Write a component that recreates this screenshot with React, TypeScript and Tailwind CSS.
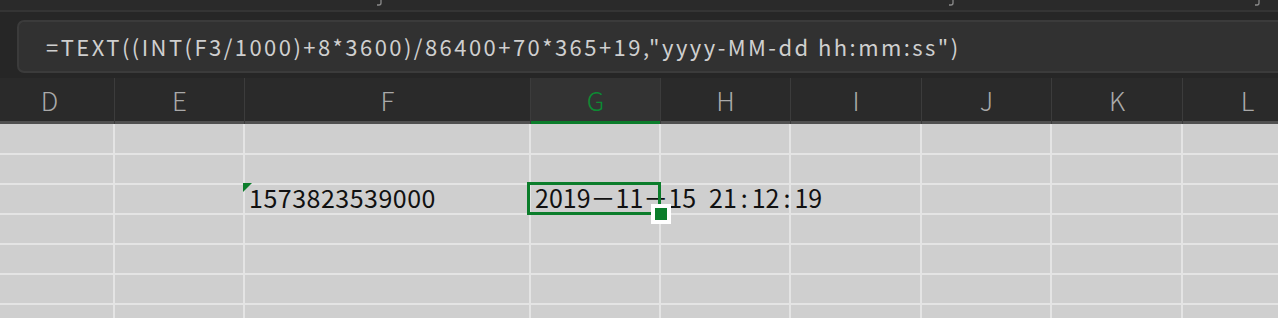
import React from 'react';

const cols = [
  { name: 'D', w: 'w-[115px]' },
  { name: 'E', w: 'w-[130px]' },
  { name: 'F', w: 'w-[286px]' },
  { name: 'G', w: 'w-[130px]' },
  { name: 'H', w: 'w-[130px]' },
  { name: 'I', w: 'w-[131px]' },
  { name: 'J', w: 'w-[130px]' },
  { name: 'K', w: 'w-[131px]' },
  { name: 'L', w: 'w-[130px]' },
];

const rows = [0, 1, 2, 3, 4, 5, 6];

const cjk = "font-['Noto_Sans_CJK_JP','Noto_Sans',sans-serif]";

function Cell({ col, row }: { col: string; row: number }) {
  const h = row === 0 ? 'h-[31px]' : 'h-[30px]';
  return (
    <div className={`relative ${h} border-b-2 border-r-2 border-[#e4e4e4]`}>
      {col === 'F' && row === 2 && (
        <>
          <div className="absolute -left-[2px] -top-[2px] h-0 w-0 border-r-[9px] border-t-[9px] border-r-transparent border-t-[#0b7d2b]" />
          <span className={`absolute left-[4px] top-[-5px] whitespace-nowrap text-[25px] leading-[34px] tracking-[0.5px] text-[#111] ${cjk}`}>
            1573823539000
          </span>
        </>
      )}
      {col === 'G' && row === 2 && (
        <>
          <span className={`absolute left-[4px] top-[-5px] z-10 whitespace-nowrap text-[25px] leading-[34px] text-[#111] ${cjk}`}>
            2019－11－15<span className="ml-[13px]">21</span>
            <span className="mx-[4px]">:</span>12<span className="mx-[4px]">:</span>19
          </span>
          <div className="absolute -left-[4px] -top-[3px] -right-[2px] -bottom-[2px] z-20 border-[3px] border-[#0b7d2b]" />
          <div className="absolute -right-[12px] -bottom-[11px] z-30 flex h-[20px] w-[20px] items-center justify-center bg-white">
            <div className="h-[12px] w-[12px] bg-[#0b7d2b]" />
          </div>
        </>
      )}
    </div>
  );
}

function Hook() {
  return (
    <svg width="8" height="6" viewBox="0 0 8 6">
      <path d="M5 0 V3 Q5 5 3 5 H1" stroke="#8a8a8a" strokeWidth="1.3" fill="none" />
    </svg>
  );
}

export default function App() {
  return (
    <div className="h-[318px] w-[1278px] overflow-hidden bg-[#cfcfcf]">
      {/* top strip, cut-off labels above */}
      <div className="flex h-[10px] items-start bg-[#2a2a2a] pl-[376px]">
        <Hook />
        <div className="ml-[564px]">
          <Hook />
        </div>
        <div className="ml-[298px]">
          <Hook />
        </div>
      </div>
      <div className="h-[2px] bg-[#343434]" />
      {/* formula bar */}
      <div className="bg-[#262626] pb-[5px] pl-[17px] pt-[8px]">
        <div className="flex h-[53px] items-center rounded-l-[7px] border-2 border-r-0 border-[#3b3b3b] bg-[#313131] pl-[27px]">
          <span className={`whitespace-nowrap text-[22px] tracking-[2.45px] text-[#cfcfcf] ${cjk}`}>
            =TEXT((INT(F3/1000)+8*3600)/86400+70*365+19,"yyyy-MM-dd hh:mm:ss")
          </span>
        </div>
      </div>
      {/* headers */}
      <div className="flex bg-[#2a2a2a]">
        <div className="-ml-[15px] flex">
          {cols.map((c, i) => (
            <div
              key={c.name}
              className={`${i === 0 ? 'w-[130px]' : c.w} shrink-0 border-r border-[#3c3c3c] ${
                c.name === 'G' ? 'bg-[#333333]' : ''
              }`}
            >
              <div
                className={`flex h-[43px] items-center justify-center text-[26px] font-light ${cjk} ${
                  c.name === 'G' ? 'text-[#0d8a33]' : 'text-[#a9a9a9]'
                }`}
              >
                {c.name}
              </div>
              <div className={`h-[3px] ${c.name === 'G' ? 'bg-[#0b7d2b]' : 'bg-[#505050]'}`} />
            </div>
          ))}
        </div>
      </div>
      {/* grid */}
      <div className="flex">
        {cols.map((c) => (
          <div key={c.name} className={`${c.w} shrink-0`}>
            {rows.map((r) => (
              <Cell key={r} col={c.name} row={r} />
            ))}
          </div>
        ))}
      </div>
    </div>
  );
}
